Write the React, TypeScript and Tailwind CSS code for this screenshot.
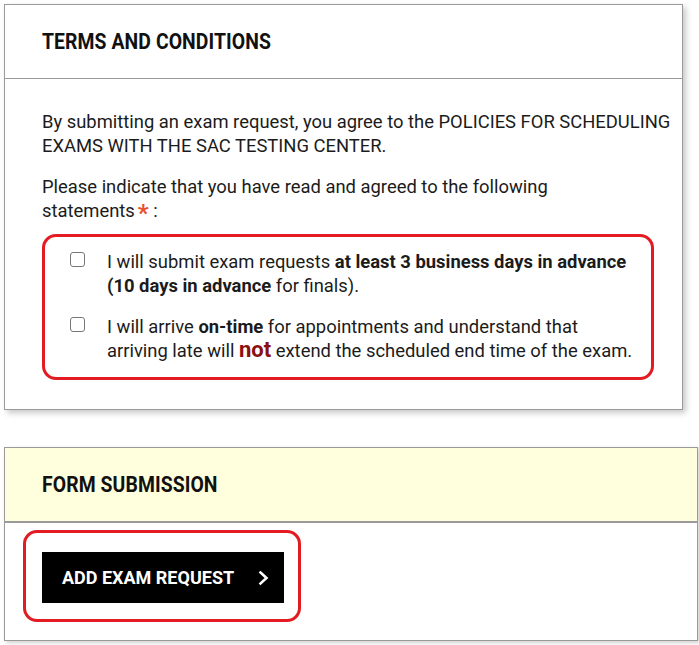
const body = { fontFamily: 'Roboto, "Noto Sans", sans-serif' };

function Heading({ children }: { children: string }) {
  return (
    <h2 className="inline-block origin-left scale-x-[0.88] text-[22px] leading-none font-bold tracking-[0.1px] text-[#111]" style={body}>
      {children}
    </h2>
  );
}

function Check({ children }: { children: React.ReactNode }) {
  return (
    <label className="flex items-start gap-[22px]">
      <span className="mt-[2px] h-[15px] w-[15px] shrink-0 rounded-[3px] border border-[#777] bg-white" />
      <span className="max-w-[534px]">{children}</span>
    </label>
  );
}

export default function App() {
  return (
    <div className="min-h-[645px] bg-white pt-[4px] pl-[4px] text-[18.4px] leading-[24px] text-[#1b1b1b]" style={body}>
      <section className="w-[679px] border border-[#9a9a9a] bg-white shadow-[3px_3px_6px_rgba(0,0,0,0.22)]">
        <div className="flex h-[74px] items-center border-b border-[#9a9a9a] pl-[37px]">
          <Heading>TERMS AND CONDITIONS</Heading>
        </div>
        <div className="pt-[31px] pr-[2px] pb-[29px] pl-[37px]">
          <p>By submitting an exam request, you agree to the POLICIES FOR SCHEDULING EXAMS WITH THE SAC TESTING CENTER.</p>
          <p className="mt-[17px] max-w-[570px]">
            Please indicate that you have read and agreed to the following statements
            <span className="relative top-[4px] ml-[3px] text-[24px] leading-[0] font-bold text-[#e8502f]">*</span> :
          </p>
          <div className="mt-[11px] w-[612px] rounded-[14px] border-[3px] border-[#e31b23] pt-[13px] pb-[14px] pl-[25px]">
            <div className="flex flex-col gap-[17px]">
              <Check>
                I will submit exam requests <b>at least 3 business days in advance (10 days in advance</b> for finals).
              </Check>
              <Check>
                I will arrive <b>on-time</b> for appointments and understand that arriving late will{' '}
                <b className="text-[22px] leading-[0] text-[#8b1111]">not</b> extend the scheduled end time of the exam.
              </Check>
            </div>
          </div>
        </div>
      </section>

      <section className="mt-[37px] w-[694px] border border-[#9a9a9a] bg-white shadow-[2px_2px_4px_rgba(0,0,0,0.18)]">
        <div className="flex h-[75px] items-center border-b-2 border-[#9a9a9a] bg-[#ffffdd] pl-[37px]">
          <Heading>FORM SUBMISSION</Heading>
        </div>
        <div className="pt-[7px] pb-[18px] pl-[18px]">
          <div className="inline-block rounded-[14px] border-[3px] border-[#e31b23] pt-[19px] pr-[14px] pb-[16px] pl-[16px]">
            <button type="button" className="flex h-[51px] w-[242px] items-center justify-between bg-black pr-[14px] pl-[20px] text-white">
              <span className="text-[18px] leading-none font-bold whitespace-nowrap" style={body}>
                ADD EXAM REQUEST
              </span>
              <svg width="12" height="16" viewBox="0 0 12 16" fill="none" stroke="white" strokeWidth="2.6" strokeLinecap="square">
                <polyline points="2.5,2.5 8.5,8 2.5,13.5" />
              </svg>
            </button>
          </div>
        </div>
      </section>
    </div>
  );
}
